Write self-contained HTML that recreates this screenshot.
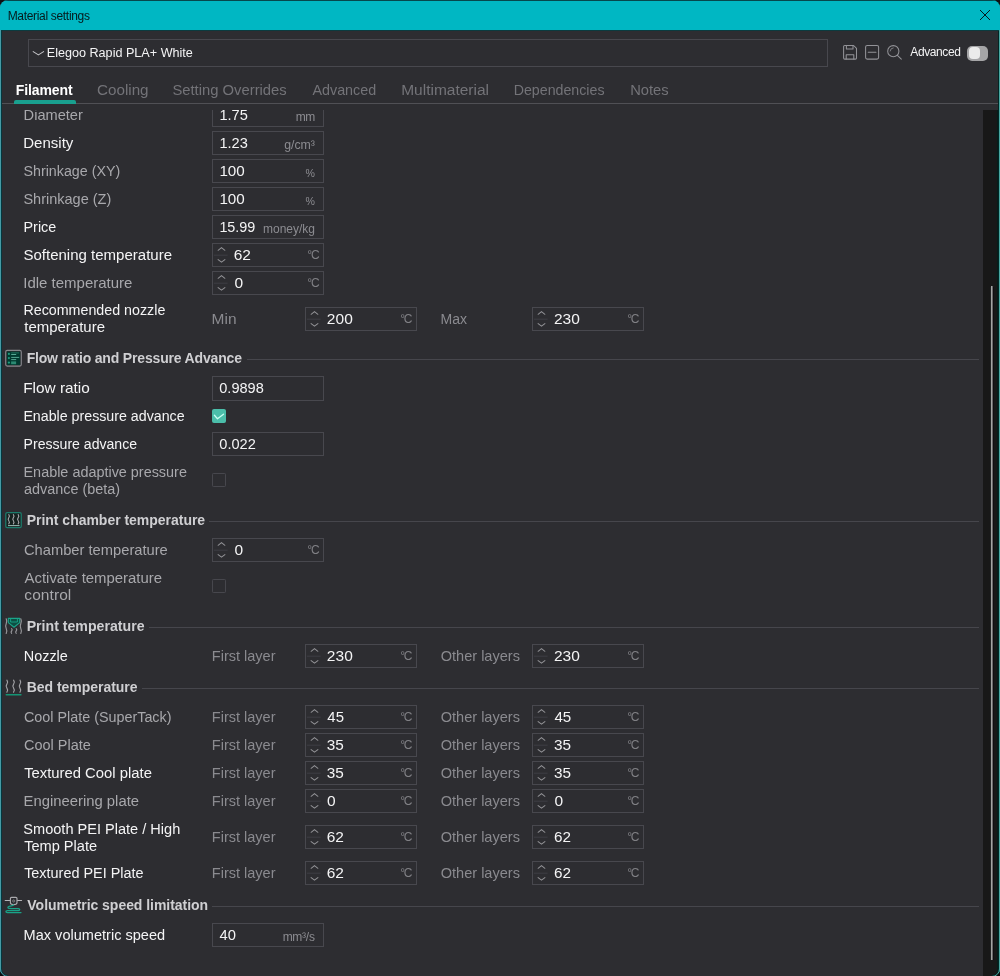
<!DOCTYPE html>
<html><head><meta charset="utf-8"><title>Material settings</title>
<style>
*{box-sizing:border-box;margin:0;padding:0}
html,body{width:1000px;height:976px;overflow:hidden;background:#101012}
body{font-family:"Liberation Sans",sans-serif;font-size:14px;color:#f4f4f5;position:relative}
.abs{position:absolute;white-space:nowrap}
.t{position:absolute;white-space:nowrap;display:block}
#root{position:absolute;left:0;top:0;width:1000px;height:976px;overflow:hidden;will-change:transform}
.box{position:absolute;width:112px;height:24px;border:1px solid #48484e}
.chk{position:absolute;left:212px;width:14px;height:14px;border:1px solid #47474d;border-radius:1.2px}
.hl{position:absolute;height:1px;background:#46464c}
</style></head>
<body>
<div id="root">
<div class="abs" style="left:0;top:0;width:1000px;height:985px;background:#2d2d31;border-radius:8px;overflow:hidden">
 <div class="abs" style="left:0;top:0;width:1px;height:985px;background:#469ba5"></div>
 <div class="abs" style="left:1px;top:0;width:1px;height:985px;background:#03383f"></div>
 <div class="abs" style="left:999px;top:0;width:1px;height:985px;background:#48a6a0"></div>
 <div class="abs" style="left:998px;top:0;width:1px;height:985px;background:#002624"></div>
 <div class="abs" style="left:0;top:0;width:1000px;height:30px;background:#00b7c3"></div>
 <div class="abs" style="left:0;top:0;width:1000px;height:1px;background:#06474c"></div>
 <div class="abs" style="left:1px;top:30px;width:998px;height:1px;background:#0b3b3f"></div>
</div>
<svg class="abs" style="left:979px;top:9px" width="12" height="12" viewBox="0 0 12 12" stroke="#06191b" stroke-width="1" fill="none"><path d="M1 1 L11 11 M11 1 L1 11"/></svg>
<div class="abs" style="left:28px;top:39px;width:800px;height:28px;border:1px solid #48484e"></div>
<svg class="abs" style="left:30px;top:46px" width="18" height="14" viewBox="30 46 18 14" fill="none" stroke="#c4c4c8" stroke-width="1.05" stroke-linecap="round" stroke-linejoin="round"><path d="M33.2 51.6 L38.4 54.9 L43.6 51.6"/></svg>
<div class="abs" style="left:967px;top:45.5px;width:21px;height:15px;border-radius:5px;background:#a5a5a7"><div style="position:absolute;left:1.6px;top:1.8px;width:11.6px;height:11.4px;border-radius:4px;background:#ebebeb"></div></div>
<div class="hl" style="left:2px;top:103px;width:996px;background:#505055"></div>
<div class="abs" style="left:13.5px;top:100px;width:62px;height:3.6px;background:#19a08f;border-radius:2px 2px 0.5px 0.5px"></div>
<div class="abs" style="left:983px;top:110px;width:15px;height:870px;background:#181818"></div><div class="abs" style="left:997px;top:110px;width:1px;height:870px;background:#081c19"></div>
<div class="abs" style="left:990px;top:286.5px;width:1px;height:673px;background:#232323"></div><div class="abs" style="left:991px;top:286px;width:1px;height:674px;background:#a5a5a5"></div><div class="abs" style="left:992px;top:286px;width:1px;height:674px;background:#6b696a"></div><div class="abs" style="left:993px;top:286.5px;width:1px;height:673px;background:#100e11"></div>
<svg class="abs" style="left:838px;top:40px" width="70" height="26" viewBox="838 40 70 26" fill="none" stroke="#929297" stroke-width="1.05" stroke-linejoin="round" stroke-linecap="round">
<path d="M844.7 45.5H853.6L856.5 48.4V58Q856.5 59.1 855.4 59.1H844.7Q843.6 59.1 843.6 58V46.6Q843.6 45.5 844.7 45.5Z"/>
<path d="M846.4 45.7V48.9H853V45.7"/>
<path d="M846.2 59V54.7H853.8V59"/>
<rect x="865.6" y="45.5" width="13" height="13.6" rx="1.6"/>
<path d="M868.2 52.3H876"/>
<circle cx="893.3" cy="51.2" r="5.6"/>
<path d="M897.4 55.3L901.3 59.2"/>
<path d="M890.1 51A3.4 3.4 0 0 1 893.2 47.9" stroke-width="0.8"/>
</svg>
<svg class="abs" style="left:0;top:966px" width="10" height="10" viewBox="0 966 10 10" fill="none"><path d="M0 969V977H8A8 8 0 0 1 0 969Z" fill="#0d0d0f"/><path d="M1.5 968.5V969A6.5 6.5 0 0 0 8 975.5" stroke="#03383f"/><path d="M0.5 968V969A7.5 7.5 0 0 0 8 976.5" stroke="#469ba5"/></svg>
<svg class="abs" style="left:990px;top:966px" width="10" height="10" viewBox="990 966 10 10" fill="none"><path d="M1000 969V977H992A8 8 0 0 0 1000 969Z" fill="#0d0d0f"/><path d="M998.5 968.5V969A6.5 6.5 0 0 1 992 975.5" stroke="#002624"/><path d="M999.5 968V969A7.5 7.5 0 0 1 992 976.5" stroke="#48a6a0"/></svg>

<div class="abs" style="left:0;top:110px;width:982px;height:20px;overflow:hidden">
<div class="box" style="left:212px;top:-7px"></div>
<span class="t" style="left:23.60px;top:-5px;font-size:14.60px;line-height:20px;color:#a8a8ac;">Diameter</span>
<span class="t" style="left:219.40px;top:-5px;font-size:14.61px;line-height:20px;color:#f4f4f5;">1.75</span>
<span class="t" style="left:295.74px;top:-3px;font-size:12.00px;line-height:20px;color:#8c8c91;letter-spacing:-0.364px;">mm</span>
</div>
<div class="box" style="left:212px;top:131px"></div>
<div class="box" style="left:212px;top:159px"></div>
<div class="box" style="left:212px;top:187px"></div>
<div class="box" style="left:212px;top:215px"></div>
<div class="box" style="left:212px;top:243px"></div>
<svg class="abs" style="left:213px;top:246px" width="16" height="18" viewBox="0 0 16 18" fill="none" stroke="#929296" stroke-width="1.05" stroke-linecap="round" stroke-linejoin="round"><path d="M5.1 4.3 L8.5 1.65 L11.9 4.3"/><path d="M5.1 13.65 L8.5 16.2 L11.9 13.65"/><path d="M1.2 9.2H14.2" stroke="#3e3e44" stroke-width="1"/></svg>
<div class="box" style="left:212px;top:271px"></div>
<svg class="abs" style="left:213px;top:274px" width="16" height="18" viewBox="0 0 16 18" fill="none" stroke="#929296" stroke-width="1.05" stroke-linecap="round" stroke-linejoin="round"><path d="M5.1 4.3 L8.5 1.65 L11.9 4.3"/><path d="M5.1 13.65 L8.5 16.2 L11.9 13.65"/><path d="M1.2 9.2H14.2" stroke="#3e3e44" stroke-width="1"/></svg>
<div class="box" style="left:305px;top:307px"></div>
<svg class="abs" style="left:306px;top:310px" width="16" height="18" viewBox="0 0 16 18" fill="none" stroke="#929296" stroke-width="1.05" stroke-linecap="round" stroke-linejoin="round"><path d="M5.1 4.3 L8.5 1.65 L11.9 4.3"/><path d="M5.1 13.65 L8.5 16.2 L11.9 13.65"/><path d="M1.2 9.2H14.2" stroke="#3e3e44" stroke-width="1"/></svg>
<div class="box" style="left:532px;top:307px"></div>
<svg class="abs" style="left:533px;top:310px" width="16" height="18" viewBox="0 0 16 18" fill="none" stroke="#929296" stroke-width="1.05" stroke-linecap="round" stroke-linejoin="round"><path d="M5.1 4.3 L8.5 1.65 L11.9 4.3"/><path d="M5.1 13.65 L8.5 16.2 L11.9 13.65"/><path d="M1.2 9.2H14.2" stroke="#3e3e44" stroke-width="1"/></svg>
<div class="abs" style="left:4px;top:349px;width:20px;height:20px"><svg width="20" height="20" viewBox="0 0 20 20" fill="none"><rect x="3" y="2.6" width="13.2" height="13.4" fill="#01392f"/><rect x="1.7" y="1.4" width="15.6" height="15.7" rx="1.5" stroke="#88888d" stroke-width="1.1"/><g fill="#1f9c7f"><circle cx="4.9" cy="4.9" r="1.05"/><circle cx="4.9" cy="9.1" r="1.05"/><circle cx="4.9" cy="13.6" r="1.15"/></g><g stroke="#5fb39e" stroke-width="0.9"><path d="M7.2 5.5H12.2M7.2 8.4H15.2M7.2 10.6H12.2"/></g><path d="M7.2 3.9H15" stroke="#2a7d69" stroke-width="0.8"/><rect x="7.1" y="12.4" width="5" height="2.8" fill="#2a8a72"/></svg></div>
<div class="hl" style="left:247px;top:359px;width:732px"></div>
<div class="box" style="left:212px;top:376px;height:25px"></div>
<div class="abs" style="left:212px;top:409px;width:14px;height:14px;border-radius:2px;background:#4bbeaa"><svg width="14" height="14" viewBox="0 0 14 14" style="position:absolute;left:0;top:0" fill="none" stroke="#c9fff4" stroke-width="1.3" stroke-linecap="round" stroke-linejoin="round"><path d="M2.4 6.3 L5.5 9.8 L11.5 5.2"/></svg></div>
<div class="box" style="left:212px;top:432px"></div>
<div class="chk" style="top:473px"></div>
<div class="abs" style="left:4px;top:511px;width:20px;height:20px"><svg width="20" height="20" viewBox="0 0 20 20" fill="none"><rect x="2.6" y="2.4" width="14" height="13.2" fill="#15211f"/><rect x="1.75" y="1.55" width="15.5" height="15" rx="1.4" stroke="#1b7d6c" stroke-width="1.2"/><g stroke="#a9a9ad" stroke-width="1.1" stroke-linecap="round"><path d="M4.80 3.60 Q6.08 5.13 4.80 6.67 Q3.52 8.20 4.80 9.73 Q6.08 11.27 4.80 12.80"/><path d="M9.40 3.60 Q10.68 5.13 9.40 6.67 Q8.12 8.20 9.40 9.73 Q10.68 11.27 9.40 12.80"/><path d="M14.20 3.60 Q15.48 5.13 14.20 6.67 Q12.92 8.20 14.20 9.73 Q15.48 11.27 14.20 12.80"/></g><path d="M4 14.6H15.6" stroke="#a8cfc6" stroke-width="0.9"/></svg></div>
<div class="hl" style="left:209px;top:521px;width:770px"></div>
<div class="box" style="left:212px;top:538px"></div>
<svg class="abs" style="left:213px;top:541px" width="16" height="18" viewBox="0 0 16 18" fill="none" stroke="#929296" stroke-width="1.05" stroke-linecap="round" stroke-linejoin="round"><path d="M5.1 4.3 L8.5 1.65 L11.9 4.3"/><path d="M5.1 13.65 L8.5 16.2 L11.9 13.65"/><path d="M1.2 9.2H14.2" stroke="#3e3e44" stroke-width="1"/></svg>
<div class="chk" style="top:579px"></div>
<div class="abs" style="left:4px;top:617px;width:20px;height:20px"><svg width="20" height="20" viewBox="0 0 20 20" fill="none"><path d="M4.3 1.4H15.7V5.6L10 10.2L4.3 5.6Z" fill="#0d4f43" stroke="#1aa58a" stroke-width="1.1" stroke-linejoin="round"/><path d="M6.6 1.6V5M13.4 1.6V5M6.6 5H13.4" stroke="#1aa58a" stroke-width="0.9"/><g stroke="#97979b" stroke-width="1.15" stroke-linecap="round"><path d="M2.20 1.80 Q3.40 4.23 2.20 6.67 Q1.00 9.10 2.20 11.53 Q3.40 13.97 2.20 16.40"/><path d="M16.80 1.80 Q18.00 4.23 16.80 6.67 Q15.60 9.10 16.80 11.53 Q18.00 13.97 16.80 16.40"/><path d="M7.60 11.60 Q8.72 12.80 7.60 14.00 Q6.48 15.20 7.60 16.40"/><path d="M12.20 11.60 Q13.32 12.80 12.20 14.00 Q11.08 15.20 12.20 16.40"/></g></svg></div>
<div class="hl" style="left:149px;top:627px;width:830px"></div>
<div class="box" style="left:305px;top:644px"></div>
<svg class="abs" style="left:306px;top:647px" width="16" height="18" viewBox="0 0 16 18" fill="none" stroke="#929296" stroke-width="1.05" stroke-linecap="round" stroke-linejoin="round"><path d="M5.1 4.3 L8.5 1.65 L11.9 4.3"/><path d="M5.1 13.65 L8.5 16.2 L11.9 13.65"/><path d="M1.2 9.2H14.2" stroke="#3e3e44" stroke-width="1"/></svg>
<div class="box" style="left:532px;top:644px"></div>
<svg class="abs" style="left:533px;top:647px" width="16" height="18" viewBox="0 0 16 18" fill="none" stroke="#929296" stroke-width="1.05" stroke-linecap="round" stroke-linejoin="round"><path d="M5.1 4.3 L8.5 1.65 L11.9 4.3"/><path d="M5.1 13.65 L8.5 16.2 L11.9 13.65"/><path d="M1.2 9.2H14.2" stroke="#3e3e44" stroke-width="1"/></svg>
<div class="abs" style="left:4px;top:678px;width:20px;height:20px"><svg width="20" height="20" viewBox="0 0 20 20" fill="none"><g stroke="#a4a4a8" stroke-width="1.15" stroke-linecap="round"><path d="M2.90 2.20 Q4.42 4.20 2.90 6.20 Q1.38 8.20 2.90 10.20 Q4.42 12.20 2.90 14.20"/><path d="M9.60 2.20 Q11.12 4.20 9.60 6.20 Q8.08 8.20 9.60 10.20 Q11.12 12.20 9.60 14.20"/><path d="M16.00 2.20 Q17.52 4.20 16.00 6.20 Q14.48 8.20 16.00 10.20 Q17.52 12.20 16.00 14.20"/></g><path d="M2.2 16.7H17" stroke="#149474" stroke-width="1.35" stroke-linecap="round"/></svg></div>
<div class="hl" style="left:142px;top:688px;width:837px"></div>
<div class="box" style="left:305px;top:705px"></div>
<svg class="abs" style="left:306px;top:708px" width="16" height="18" viewBox="0 0 16 18" fill="none" stroke="#929296" stroke-width="1.05" stroke-linecap="round" stroke-linejoin="round"><path d="M5.1 4.3 L8.5 1.65 L11.9 4.3"/><path d="M5.1 13.65 L8.5 16.2 L11.9 13.65"/><path d="M1.2 9.2H14.2" stroke="#3e3e44" stroke-width="1"/></svg>
<div class="box" style="left:532px;top:705px"></div>
<svg class="abs" style="left:533px;top:708px" width="16" height="18" viewBox="0 0 16 18" fill="none" stroke="#929296" stroke-width="1.05" stroke-linecap="round" stroke-linejoin="round"><path d="M5.1 4.3 L8.5 1.65 L11.9 4.3"/><path d="M5.1 13.65 L8.5 16.2 L11.9 13.65"/><path d="M1.2 9.2H14.2" stroke="#3e3e44" stroke-width="1"/></svg>
<div class="box" style="left:305px;top:733px"></div>
<svg class="abs" style="left:306px;top:736px" width="16" height="18" viewBox="0 0 16 18" fill="none" stroke="#929296" stroke-width="1.05" stroke-linecap="round" stroke-linejoin="round"><path d="M5.1 4.3 L8.5 1.65 L11.9 4.3"/><path d="M5.1 13.65 L8.5 16.2 L11.9 13.65"/><path d="M1.2 9.2H14.2" stroke="#3e3e44" stroke-width="1"/></svg>
<div class="box" style="left:532px;top:733px"></div>
<svg class="abs" style="left:533px;top:736px" width="16" height="18" viewBox="0 0 16 18" fill="none" stroke="#929296" stroke-width="1.05" stroke-linecap="round" stroke-linejoin="round"><path d="M5.1 4.3 L8.5 1.65 L11.9 4.3"/><path d="M5.1 13.65 L8.5 16.2 L11.9 13.65"/><path d="M1.2 9.2H14.2" stroke="#3e3e44" stroke-width="1"/></svg>
<div class="box" style="left:305px;top:761px"></div>
<svg class="abs" style="left:306px;top:764px" width="16" height="18" viewBox="0 0 16 18" fill="none" stroke="#929296" stroke-width="1.05" stroke-linecap="round" stroke-linejoin="round"><path d="M5.1 4.3 L8.5 1.65 L11.9 4.3"/><path d="M5.1 13.65 L8.5 16.2 L11.9 13.65"/><path d="M1.2 9.2H14.2" stroke="#3e3e44" stroke-width="1"/></svg>
<div class="box" style="left:532px;top:761px"></div>
<svg class="abs" style="left:533px;top:764px" width="16" height="18" viewBox="0 0 16 18" fill="none" stroke="#929296" stroke-width="1.05" stroke-linecap="round" stroke-linejoin="round"><path d="M5.1 4.3 L8.5 1.65 L11.9 4.3"/><path d="M5.1 13.65 L8.5 16.2 L11.9 13.65"/><path d="M1.2 9.2H14.2" stroke="#3e3e44" stroke-width="1"/></svg>
<div class="box" style="left:305px;top:789px"></div>
<svg class="abs" style="left:306px;top:792px" width="16" height="18" viewBox="0 0 16 18" fill="none" stroke="#929296" stroke-width="1.05" stroke-linecap="round" stroke-linejoin="round"><path d="M5.1 4.3 L8.5 1.65 L11.9 4.3"/><path d="M5.1 13.65 L8.5 16.2 L11.9 13.65"/><path d="M1.2 9.2H14.2" stroke="#3e3e44" stroke-width="1"/></svg>
<div class="box" style="left:532px;top:789px"></div>
<svg class="abs" style="left:533px;top:792px" width="16" height="18" viewBox="0 0 16 18" fill="none" stroke="#929296" stroke-width="1.05" stroke-linecap="round" stroke-linejoin="round"><path d="M5.1 4.3 L8.5 1.65 L11.9 4.3"/><path d="M5.1 13.65 L8.5 16.2 L11.9 13.65"/><path d="M1.2 9.2H14.2" stroke="#3e3e44" stroke-width="1"/></svg>
<div class="box" style="left:305px;top:825px"></div>
<svg class="abs" style="left:306px;top:828px" width="16" height="18" viewBox="0 0 16 18" fill="none" stroke="#929296" stroke-width="1.05" stroke-linecap="round" stroke-linejoin="round"><path d="M5.1 4.3 L8.5 1.65 L11.9 4.3"/><path d="M5.1 13.65 L8.5 16.2 L11.9 13.65"/><path d="M1.2 9.2H14.2" stroke="#3e3e44" stroke-width="1"/></svg>
<div class="box" style="left:532px;top:825px"></div>
<svg class="abs" style="left:533px;top:828px" width="16" height="18" viewBox="0 0 16 18" fill="none" stroke="#929296" stroke-width="1.05" stroke-linecap="round" stroke-linejoin="round"><path d="M5.1 4.3 L8.5 1.65 L11.9 4.3"/><path d="M5.1 13.65 L8.5 16.2 L11.9 13.65"/><path d="M1.2 9.2H14.2" stroke="#3e3e44" stroke-width="1"/></svg>
<div class="box" style="left:305px;top:861px"></div>
<svg class="abs" style="left:306px;top:864px" width="16" height="18" viewBox="0 0 16 18" fill="none" stroke="#929296" stroke-width="1.05" stroke-linecap="round" stroke-linejoin="round"><path d="M5.1 4.3 L8.5 1.65 L11.9 4.3"/><path d="M5.1 13.65 L8.5 16.2 L11.9 13.65"/><path d="M1.2 9.2H14.2" stroke="#3e3e44" stroke-width="1"/></svg>
<div class="box" style="left:532px;top:861px"></div>
<svg class="abs" style="left:533px;top:864px" width="16" height="18" viewBox="0 0 16 18" fill="none" stroke="#929296" stroke-width="1.05" stroke-linecap="round" stroke-linejoin="round"><path d="M5.1 4.3 L8.5 1.65 L11.9 4.3"/><path d="M5.1 13.65 L8.5 16.2 L11.9 13.65"/><path d="M1.2 9.2H14.2" stroke="#3e3e44" stroke-width="1"/></svg>
<div class="abs" style="left:4px;top:896px;width:20px;height:20px"><svg width="20" height="20" viewBox="0 0 20 20" fill="none"><path d="M1.2 4.5H6.4M13 4.5H17.6" stroke="#b4b4b8" stroke-width="1.1" stroke-linecap="round"/><path d="M7.6 1.4H11.8Q13 1.4 13 2.6V6.4Q13 8.4 9.7 8.6Q6.4 8.4 6.4 6.4V2.6Q6.4 1.4 7.6 1.4Z" stroke="#aaaaae" stroke-width="1.15" fill="#2a2a2e"/><circle cx="9.7" cy="5" r="1.1" stroke="#8c8c90" stroke-width="0.8"/><path d="M9.4 8.8C9.4 10.6 3.9 9.6 3.9 11.4C3.9 12.6 6 12.5 8 12.5H14.4C16.2 12.5 16.2 14.5 14.4 14.5H3.4C1.4 14.5 1.4 16.5 3.4 16.5H17" stroke="#19a388" stroke-width="1.25" stroke-linecap="round" stroke-linejoin="round"/></svg></div>
<div class="hl" style="left:212px;top:906px;width:767px"></div>
<div class="box" style="left:212px;top:923px"></div>
<span class="t" style="left:7.70px;top:6px;font-size:12.00px;line-height:20px;color:#06191b;letter-spacing:-0.320px;">Material settings</span>
<span class="t" style="left:46.74px;top:43px;font-size:12.61px;line-height:20px;color:#f4f4f5;">Elegoo Rapid PLA+ White</span>
<span class="t" style="left:910.36px;top:42px;font-size:12.00px;line-height:20px;color:#f4f4f5;letter-spacing:-0.410px;">Advanced</span>
<span class="t" style="left:15.76px;top:80px;font-size:14.00px;line-height:20px;color:#ffffff;letter-spacing:-0.094px;font-weight:bold;">Filament</span>
<span class="t" style="left:97.03px;top:80px;font-size:15.19px;line-height:20px;color:#737378;">Cooling</span>
<span class="t" style="left:172.40px;top:80px;font-size:14.81px;line-height:20px;color:#737378;">Setting Overrides</span>
<span class="t" style="left:312.44px;top:80px;font-size:14.33px;line-height:20px;color:#737378;">Advanced</span>
<span class="t" style="left:401.18px;top:80px;font-size:15.50px;line-height:20px;color:#737378;">Multimaterial</span>
<span class="t" style="left:513.70px;top:80px;font-size:14.21px;line-height:20px;color:#737378;">Dependencies</span>
<span class="t" style="left:630.14px;top:80px;font-size:14.72px;line-height:20px;color:#737378;">Notes</span>
<span class="t" style="left:23.28px;top:133px;font-size:15.02px;line-height:20px;color:#f4f4f5;">Density</span>
<span class="t" style="left:23.48px;top:161px;font-size:14.28px;line-height:20px;color:#a8a8ac;">Shrinkage (XY)</span>
<span class="t" style="left:23.44px;top:189px;font-size:14.51px;line-height:20px;color:#a8a8ac;">Shrinkage (Z)</span>
<span class="t" style="left:23.54px;top:217px;font-size:14.36px;line-height:20px;color:#f4f4f5;">Price</span>
<span class="t" style="left:23.45px;top:245px;font-size:15.02px;line-height:20px;color:#f4f4f5;">Softening temperature</span>
<span class="t" style="left:23.24px;top:273px;font-size:15.00px;line-height:20px;color:#a8a8ac;">Idle temperature</span>
<span class="t" style="left:23.42px;top:300px;font-size:14.27px;line-height:20px;color:#f4f4f5;">Recommended nozzle</span>
<span class="t" style="left:24.27px;top:317px;font-size:14.97px;line-height:20px;color:#f4f4f5;">temperature</span>
<span class="t" style="left:23.20px;top:378px;font-size:15.38px;line-height:20px;color:#f4f4f5;">Flow ratio</span>
<span class="t" style="left:23.38px;top:406px;font-size:14.22px;line-height:20px;color:#f4f4f5;">Enable pressure advance</span>
<span class="t" style="left:23.60px;top:434px;font-size:14.09px;line-height:20px;color:#f4f4f5;">Pressure advance</span>
<span class="t" style="left:23.53px;top:462px;font-size:14.41px;line-height:20px;color:#a8a8ac;">Enable adaptive pressure</span>
<span class="t" style="left:24.07px;top:479px;font-size:14.42px;line-height:20px;color:#a8a8ac;">advance (beta)</span>
<span class="t" style="left:23.97px;top:540px;font-size:14.71px;line-height:20px;color:#a8a8ac;">Chamber temperature</span>
<span class="t" style="left:24.60px;top:568px;font-size:14.90px;line-height:20px;color:#a8a8ac;">Activate temperature</span>
<span class="t" style="left:24.35px;top:585px;font-size:15.50px;line-height:20px;color:#a8a8ac;letter-spacing:0.071px;">control</span>
<span class="t" style="left:23.78px;top:646px;font-size:14.42px;line-height:20px;color:#f4f4f5;">Nozzle</span>
<span class="t" style="left:24.01px;top:707px;font-size:14.35px;line-height:20px;color:#a8a8ac;">Cool Plate (SuperTack)</span>
<span class="t" style="left:24.10px;top:735px;font-size:14.46px;line-height:20px;color:#a8a8ac;">Cool Plate</span>
<span class="t" style="left:24.13px;top:763px;font-size:14.83px;line-height:20px;color:#f4f4f5;">Textured Cool plate</span>
<span class="t" style="left:23.61px;top:791px;font-size:14.83px;line-height:20px;color:#a8a8ac;">Engineering plate</span>
<span class="t" style="left:23.37px;top:819px;font-size:14.55px;line-height:20px;color:#f4f4f5;">Smooth PEI Plate / High</span>
<span class="t" style="left:24.17px;top:836px;font-size:14.59px;line-height:20px;color:#f4f4f5;">Temp Plate</span>
<span class="t" style="left:24.16px;top:863px;font-size:14.41px;line-height:20px;color:#f4f4f5;">Textured PEI Plate</span>
<span class="t" style="left:23.60px;top:925px;font-size:14.55px;line-height:20px;color:#f4f4f5;">Max volumetric speed</span>
<span class="t" style="left:26.65px;top:348px;font-size:14.00px;line-height:20px;color:#cfcfd2;letter-spacing:-0.171px;font-weight:bold;">Flow ratio and Pressure Advance</span>
<span class="t" style="left:26.73px;top:510px;font-size:14.00px;line-height:20px;color:#cfcfd2;letter-spacing:-0.021px;font-weight:bold;">Print chamber temperature</span>
<span class="t" style="left:26.67px;top:616px;font-size:14.15px;line-height:20px;color:#cfcfd2;font-weight:bold;">Print temperature</span>
<span class="t" style="left:26.65px;top:677px;font-size:14.00px;line-height:20px;color:#cfcfd2;letter-spacing:-0.023px;font-weight:bold;">Bed temperature</span>
<span class="t" style="left:27.36px;top:895px;font-size:14.00px;line-height:20px;color:#cfcfd2;letter-spacing:-0.040px;font-weight:bold;">Volumetric speed limitation</span>
<span class="t" style="left:211.59px;top:309px;font-size:15.48px;line-height:20px;color:#8a8a8f;">Min</span>
<span class="t" style="left:440.52px;top:309px;font-size:14.02px;line-height:20px;color:#8a8a8f;">Max</span>
<span class="t" style="left:211.87px;top:646px;font-size:14.51px;line-height:20px;color:#8a8a8f;">First layer</span>
<span class="t" style="left:440.78px;top:646px;font-size:14.54px;line-height:20px;color:#8a8a8f;">Other layers</span>
<span class="t" style="left:211.87px;top:707px;font-size:14.51px;line-height:20px;color:#8a8a8f;">First layer</span>
<span class="t" style="left:440.78px;top:707px;font-size:14.54px;line-height:20px;color:#8a8a8f;">Other layers</span>
<span class="t" style="left:211.87px;top:735px;font-size:14.51px;line-height:20px;color:#8a8a8f;">First layer</span>
<span class="t" style="left:440.78px;top:735px;font-size:14.54px;line-height:20px;color:#8a8a8f;">Other layers</span>
<span class="t" style="left:211.87px;top:763px;font-size:14.51px;line-height:20px;color:#8a8a8f;">First layer</span>
<span class="t" style="left:440.78px;top:763px;font-size:14.54px;line-height:20px;color:#8a8a8f;">Other layers</span>
<span class="t" style="left:211.87px;top:791px;font-size:14.51px;line-height:20px;color:#8a8a8f;">First layer</span>
<span class="t" style="left:440.78px;top:791px;font-size:14.54px;line-height:20px;color:#8a8a8f;">Other layers</span>
<span class="t" style="left:211.87px;top:827px;font-size:14.51px;line-height:20px;color:#8a8a8f;">First layer</span>
<span class="t" style="left:440.78px;top:827px;font-size:14.54px;line-height:20px;color:#8a8a8f;">Other layers</span>
<span class="t" style="left:211.87px;top:863px;font-size:14.51px;line-height:20px;color:#8a8a8f;">First layer</span>
<span class="t" style="left:440.78px;top:863px;font-size:14.54px;line-height:20px;color:#8a8a8f;">Other layers</span>
<span class="t" style="left:219.40px;top:133px;font-size:14.60px;line-height:20px;color:#f4f4f5;">1.23</span>
<span class="t" style="left:219.39px;top:161px;font-size:15.21px;line-height:20px;color:#f4f4f5;">100</span>
<span class="t" style="left:219.39px;top:189px;font-size:15.21px;line-height:20px;color:#f4f4f5;">100</span>
<span class="t" style="left:219.38px;top:217px;font-size:14.37px;line-height:20px;color:#f4f4f5;">15.99</span>
<span class="t" style="left:233.65px;top:245px;font-size:15.50px;line-height:20px;color:#f4f4f5;">62</span>
<span class="t" style="left:234.41px;top:273px;font-size:15.50px;line-height:20px;color:#f4f4f5;">0</span>
<span class="t" style="left:326.66px;top:309px;font-size:15.50px;line-height:20px;color:#f4f4f5;letter-spacing:0.229px;">200</span>
<span class="t" style="left:553.97px;top:309px;font-size:15.50px;line-height:20px;color:#f4f4f5;letter-spacing:0.030px;">230</span>
<span class="t" style="left:219.26px;top:378px;font-size:14.56px;line-height:20px;color:#f4f4f5;">0.9898</span>
<span class="t" style="left:219.34px;top:434px;font-size:14.59px;line-height:20px;color:#f4f4f5;">0.022</span>
<span class="t" style="left:234.41px;top:540px;font-size:15.50px;line-height:20px;color:#f4f4f5;">0</span>
<span class="t" style="left:326.66px;top:646px;font-size:15.50px;line-height:20px;color:#f4f4f5;letter-spacing:0.229px;">230</span>
<span class="t" style="left:553.97px;top:646px;font-size:15.50px;line-height:20px;color:#f4f4f5;letter-spacing:0.030px;">230</span>
<span class="t" style="left:219.59px;top:925px;font-size:14.72px;line-height:20px;color:#f4f4f5;">40</span>
<span class="t" style="left:327.34px;top:707px;font-size:14.93px;line-height:20px;color:#f4f4f5;">45</span>
<span class="t" style="left:554.40px;top:707px;font-size:15.13px;line-height:20px;color:#f4f4f5;">45</span>
<span class="t" style="left:326.67px;top:735px;font-size:15.32px;line-height:20px;color:#f4f4f5;">35</span>
<span class="t" style="left:553.97px;top:735px;font-size:15.31px;line-height:20px;color:#f4f4f5;">35</span>
<span class="t" style="left:326.67px;top:763px;font-size:15.32px;line-height:20px;color:#f4f4f5;">35</span>
<span class="t" style="left:553.97px;top:763px;font-size:15.31px;line-height:20px;color:#f4f4f5;">35</span>
<span class="t" style="left:327.03px;top:791px;font-size:15.50px;line-height:20px;color:#f4f4f5;">0</span>
<span class="t" style="left:554.47px;top:791px;font-size:15.50px;line-height:20px;color:#f4f4f5;">0</span>
<span class="t" style="left:326.67px;top:827px;font-size:15.48px;line-height:20px;color:#f4f4f5;">62</span>
<span class="t" style="left:554.10px;top:827px;font-size:15.26px;line-height:20px;color:#f4f4f5;">62</span>
<span class="t" style="left:326.67px;top:863px;font-size:15.48px;line-height:20px;color:#f4f4f5;">62</span>
<span class="t" style="left:554.10px;top:863px;font-size:15.26px;line-height:20px;color:#f4f4f5;">62</span>
<span class="t" style="left:284.19px;top:135px;font-size:12.32px;line-height:20px;color:#8c8c91;">g/cm³</span>
<span class="t" style="left:305.59px;top:163px;font-size:10.60px;line-height:20px;color:#8c8c91;">%</span>
<span class="t" style="left:305.59px;top:191px;font-size:10.60px;line-height:20px;color:#8c8c91;">%</span>
<span class="t" style="left:263.02px;top:219px;font-size:12.00px;line-height:20px;color:#8c8c91;">money/kg</span>
<span class="t" style="left:307.33px;top:245px;font-size:12.00px;line-height:20px;color:#808085;letter-spacing:-1.150px;">°C</span>
<span class="t" style="left:307.33px;top:273px;font-size:12.00px;line-height:20px;color:#808085;letter-spacing:-1.150px;">°C</span>
<span class="t" style="left:400.21px;top:309px;font-size:12.00px;line-height:20px;color:#808085;letter-spacing:-1.230px;">°C</span>
<span class="t" style="left:627.21px;top:309px;font-size:12.00px;line-height:20px;color:#808085;letter-spacing:-1.230px;">°C</span>
<span class="t" style="left:307.33px;top:540px;font-size:12.00px;line-height:20px;color:#808085;letter-spacing:-1.150px;">°C</span>
<span class="t" style="left:400.21px;top:646px;font-size:12.00px;line-height:20px;color:#808085;letter-spacing:-1.230px;">°C</span>
<span class="t" style="left:627.21px;top:646px;font-size:12.00px;line-height:20px;color:#808085;letter-spacing:-1.230px;">°C</span>
<span class="t" style="left:282.63px;top:927px;font-size:12.00px;line-height:20px;color:#8c8c91;letter-spacing:-0.249px;">mm³/s</span>
<span class="t" style="left:400.21px;top:707px;font-size:12.00px;line-height:20px;color:#808085;letter-spacing:-1.230px;">°C</span>
<span class="t" style="left:627.21px;top:707px;font-size:12.00px;line-height:20px;color:#808085;letter-spacing:-1.230px;">°C</span>
<span class="t" style="left:400.21px;top:735px;font-size:12.00px;line-height:20px;color:#808085;letter-spacing:-1.230px;">°C</span>
<span class="t" style="left:627.21px;top:735px;font-size:12.00px;line-height:20px;color:#808085;letter-spacing:-1.230px;">°C</span>
<span class="t" style="left:400.21px;top:763px;font-size:12.00px;line-height:20px;color:#808085;letter-spacing:-1.230px;">°C</span>
<span class="t" style="left:627.21px;top:763px;font-size:12.00px;line-height:20px;color:#808085;letter-spacing:-1.230px;">°C</span>
<span class="t" style="left:400.21px;top:791px;font-size:12.00px;line-height:20px;color:#808085;letter-spacing:-1.230px;">°C</span>
<span class="t" style="left:627.21px;top:791px;font-size:12.00px;line-height:20px;color:#808085;letter-spacing:-1.230px;">°C</span>
<span class="t" style="left:400.21px;top:827px;font-size:12.00px;line-height:20px;color:#808085;letter-spacing:-1.230px;">°C</span>
<span class="t" style="left:627.21px;top:827px;font-size:12.00px;line-height:20px;color:#808085;letter-spacing:-1.230px;">°C</span>
<span class="t" style="left:400.21px;top:863px;font-size:12.00px;line-height:20px;color:#808085;letter-spacing:-1.230px;">°C</span>
<span class="t" style="left:627.21px;top:863px;font-size:12.00px;line-height:20px;color:#808085;letter-spacing:-1.230px;">°C</span>
</div>
</body></html>
